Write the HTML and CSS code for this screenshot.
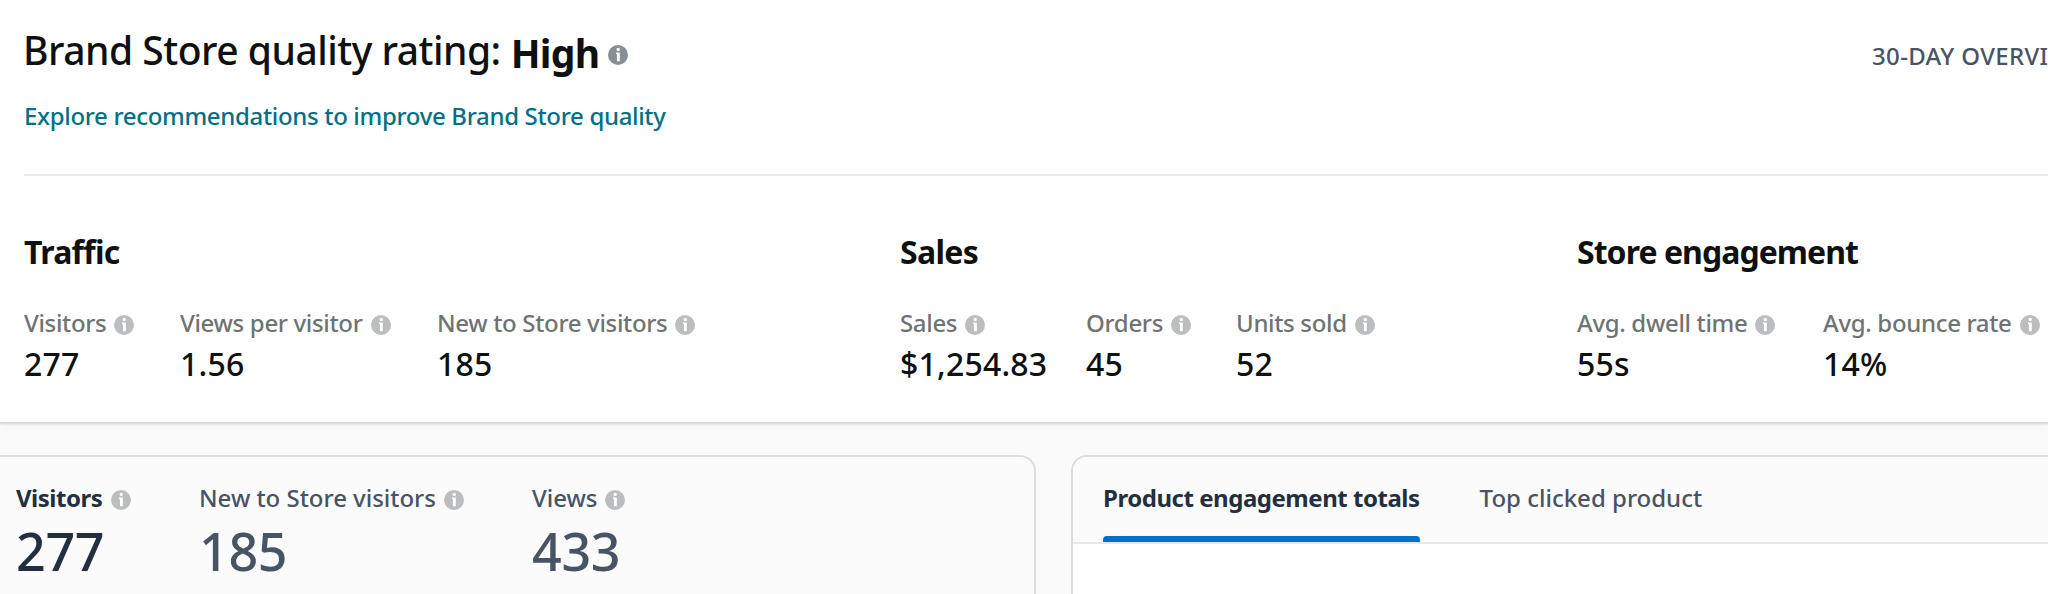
FILE: index.html
```
<!DOCTYPE html>
<html lang="en">
<head>
  <meta charset="UTF-8" />
  <meta name="viewport" content="width=device-width, initial-scale=1.0"/>
  <title>Brand Store insights</title>
  <link rel="stylesheet" href="styles.css">
</head>
<body>

<svg class="sprite" aria-hidden="true">
  <symbol id="info" viewBox="0 0 20 20">
    <circle cx="10" cy="10" r="10" fill="currentColor"/>
    <circle cx="10.2" cy="4.4" r="1.7" fill="#fff"/>
    <path d="M8 7.6h3.8v8.6H8.9V9H8z" fill="#fff"/>
  </symbol>
</svg>

<section class="overview">
  <header class="overview-header">
    <h1><span class="title">Brand Store quality rating:</span> <b class="rating">High</b><svg class="info dark"><use href="#info"/></svg></h1>
    <span class="period">30-DAY OVERVI</span>
  </header>
  <a class="link" href="#">Explore recommendations to improve Brand Store quality</a>

  <div class="groups">
    <div class="group traffic">
      <h2>Traffic</h2>
      <div class="metrics">
        <div class="metric"><div class="label"><span>Visitors</span><svg class="info"><use href="#info"/></svg></div><div class="value">277</div></div>
        <div class="metric"><div class="label"><span>Views per visitor</span><svg class="info"><use href="#info"/></svg></div><div class="value">1.56</div></div>
        <div class="metric"><div class="label"><span>New to Store visitors</span><svg class="info"><use href="#info"/></svg></div><div class="value">185</div></div>
      </div>
    </div>
    <div class="group sales">
      <h2>Sales</h2>
      <div class="metrics">
        <div class="metric"><div class="label"><span>Sales</span><svg class="info"><use href="#info"/></svg></div><div class="value">$1,254.83</div></div>
        <div class="metric"><div class="label"><span>Orders</span><svg class="info"><use href="#info"/></svg></div><div class="value">45</div></div>
        <div class="metric"><div class="label"><span>Units sold</span><svg class="info"><use href="#info"/></svg></div><div class="value">52</div></div>
      </div>
    </div>
    <div class="group engagement">
      <h2>Store engagement</h2>
      <div class="metrics">
        <div class="metric"><div class="label"><span>Avg. dwell time</span><svg class="info"><use href="#info"/></svg></div><div class="value">55s</div></div>
        <div class="metric"><div class="label"><span>Avg. bounce rate</span><svg class="info"><use href="#info"/></svg></div><div class="value">14%</div></div>
      </div>
    </div>
  </div>
</section>

<section class="cards">
  <div class="card stats">
    <div class="stat active"><div class="stat-label"><span>Visitors</span><svg class="info"><use href="#info"/></svg></div><div class="stat-value">277</div></div>
    <div class="stat"><div class="stat-label"><span>New to Store visitors</span><svg class="info"><use href="#info"/></svg></div><div class="stat-value">185</div></div>
    <div class="stat"><div class="stat-label"><span>Views</span><svg class="info"><use href="#info"/></svg></div><div class="stat-value">433</div></div>
  </div>
  <div class="card products">
    <nav class="tabs">
      <a class="tab active" href="#">Product engagement totals</a>
      <a class="tab" href="#">Top clicked product</a>
    </nav>
  </div>
</section>

</body>
</html>
```
FILE: styles.css
```
* {
  box-sizing: border-box;
}
body {
  font-family: "Noto Sans", sans-serif;
  font-size: 24px;
  font-weight: 500;
  line-height: 32px;
  letter-spacing: -0.33px;
  margin: 0;
  overflow: hidden;
  white-space: nowrap;
  background-color: #fafafa;
  color: #0f1111;
}
a {
  text-decoration: none;
}
.sprite {
  display: none;
}
.info {
  width: 20px;
  height: 20px;
  flex: none;
  color: #bbbdbf;
}
.info.dark {
  color: #878f96;
}

/* overview */
.overview {
  height: 422px;
  padding: 23px 0 0 24px;
  background: #fff;
  box-shadow: 0 1px 2px 1px #d2d4da, 0 3px 8px rgba(0,0,0,0.05);
}
.overview-header {
  display: flex;
  justify-content: space-between;
  height: 77px;
}
h1 {
  display: flex;
  margin: 0 0 0 -1px;
  font-size: 39px;
  font-weight: 500;
  line-height: 54px;
  letter-spacing: -0.5px;
}
.rating {
  margin: 3px 0 0 10px;
  letter-spacing: -0.7px;
}
h1 .info {
  margin: 22px 0 0 9px;
}
.period {
  width: 176px;
  margin-top: 17px;
  letter-spacing: 0.35px;
  color: #485363;
}
.link {
  display: block;
  height: 76px;
  color: #007185;
  border-bottom: 2px solid #e7e9ee;
}
.groups {
  display: grid;
  grid-template-columns: 876px 677px auto;
  padding-top: 54px;
}
h2 {
  margin: 0 0 33px;
  font-size: 32px;
  font-weight: 700;
  line-height: 44px;
  letter-spacing: -0.95px;
}
.traffic h2, .sales h2 {
  letter-spacing: -0.7px;
}
.metrics {
  display: grid;
}
.traffic .metrics {
  grid-template-columns: 156px 257px auto;
}
.sales .metrics {
  grid-template-columns: 186px 150px auto;
}
.engagement .metrics {
  grid-template-columns: 246px auto;
}
.label, .stat-label {
  display: flex;
  align-items: center;
  gap: 8px;
}
.label .info, .stat-label .info {
  margin-top: 3px;
}
.label {
  color: #6f7373;
}
.value {
  padding-top: 3px;
  font-size: 32px;
  line-height: 44px;
  letter-spacing: 0.2px;
}

/* bottom cards */
.cards {
  display: grid;
  grid-template-columns: 1036px 977px;
  gap: 35px;
  padding-top: 33px;
}
.card {
  height: 139px;
  border: 2px solid #d9dce1;
  border-width: 2px 2px 0 0;
  border-radius: 0 16px 0 0;
  background: #fbfbfb;
}
.stats {
  display: grid;
  grid-template-columns: 183px 333px auto;
  padding: 25px 0 0 16px;
  color: #485363;
}
.stat-label {
  letter-spacing: -0.02px;
}
.stat-value {
  padding-top: 2px;
  font-size: 52px;
  line-height: 70px;
}
.stat.active {
  color: #232f3e;
}
.stat.active .stat-label {
  gap: 9px;
  font-weight: 700;
  letter-spacing: -0.5px;
}
.products {
  border-width: 2px 0 0 2px;
  border-radius: 16px 0 0 0;
  background: #fff;
}
.tabs {
  display: flex;
  gap: 60px;
  height: 87px;
  padding: 25px 0 0 30px;
  background: #fbfbfb;
  border-bottom: 2px solid #e7e8ea;
  border-radius: 14px 0 0 0;
}
.tab {
  color: #485363;
  letter-spacing: 0;
}
.tab.active {
  position: relative;
  color: #232f3e;
  font-weight: 700;
  letter-spacing: -0.47px;
}
.tab.active::after {
  content: "";
  position: absolute;
  left: 0;
  right: 0;
  bottom: 0;
  height: 6px;
  border-radius: 4px 4px 0 0;
  background: #0070cc;
}
```
